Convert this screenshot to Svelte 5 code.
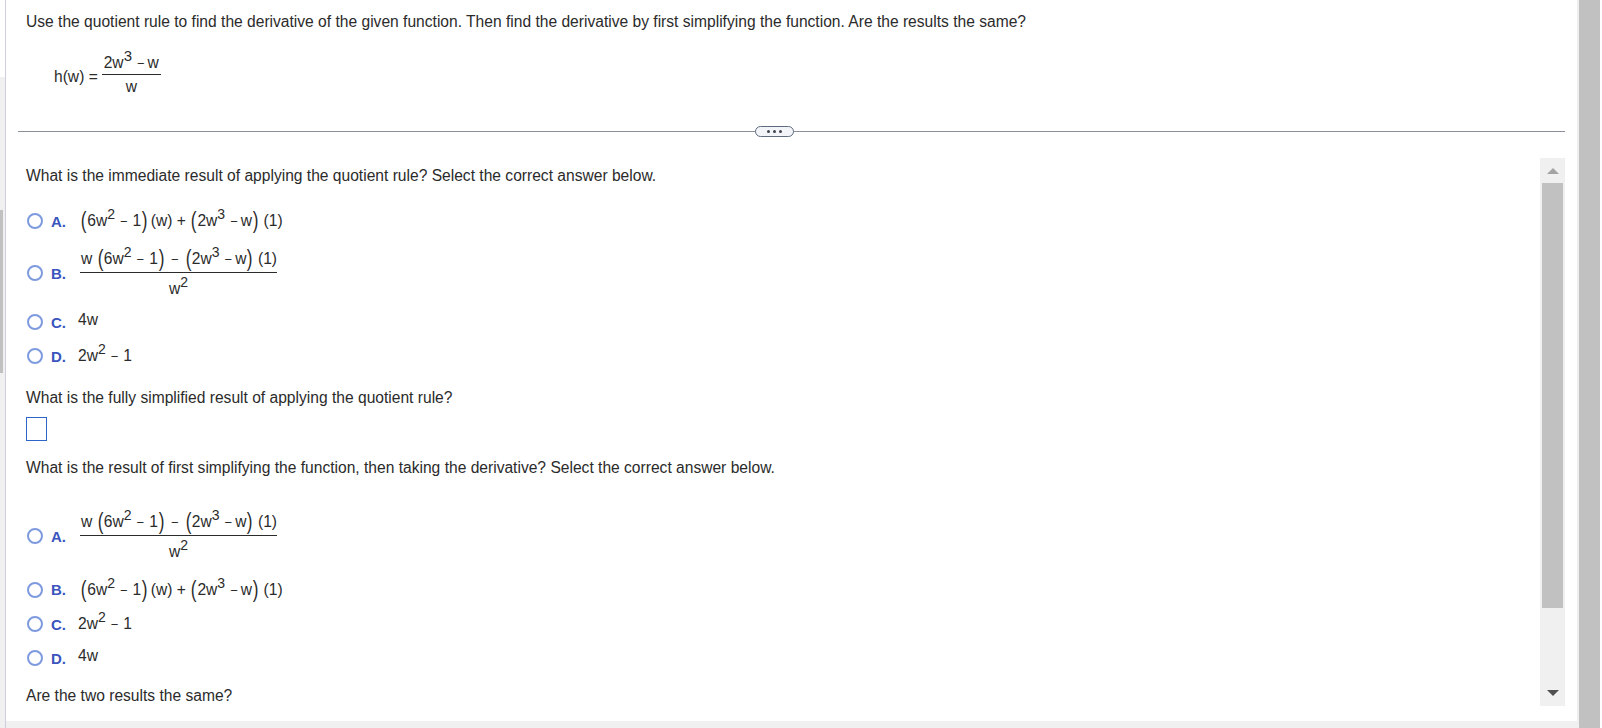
<script lang="ts">
	type Choice = { letter: string; kind: 'product' | 'fraction' | 'four' | 'two' };

	const firstChoices: Choice[] = [
		{ letter: 'A.', kind: 'product' },
		{ letter: 'B.', kind: 'fraction' },
		{ letter: 'C.', kind: 'four' },
		{ letter: 'D.', kind: 'two' }
	];
	const secondChoices: Choice[] = [
		{ letter: 'A.', kind: 'fraction' },
		{ letter: 'B.', kind: 'product' },
		{ letter: 'C.', kind: 'two' },
		{ letter: 'D.', kind: 'four' }
	];
</script>

{#snippet group(inner)}<span class="paren">(</span>{@render inner()}<span class="paren">)</span>{/snippet}

{#snippet six()}6w<sup>2</sup><span class="minus">−</span>1{/snippet}
{#snippet twoCube()}2w<sup>3</sup><span class="minus tight">−</span>w{/snippet}

{#snippet expression(kind)}
	{#if kind === 'product'}
		<span class="math">{@render group(six)}<span class="times">{' (w) + '}</span>{@render group(twoCube)} (1)</span>
	{:else if kind === 'fraction'}
		<span class="frac wide">
			<span class="num">w {@render group(six)}<span class="minus between">−</span>{@render group(twoCube)} (1)</span>
			<span class="den">w<sup>2</sup></span>
		</span>
	{:else if kind === 'four'}
		<span class="math plain raised">4w</span>
	{:else}
		<span class="math plain">2w<sup>2</sup><span class="minus">−</span>1</span>
	{/if}
{/snippet}

{#snippet choices(list, cls)}
	<ul class="choices {cls}">
		{#each list as choice}
			<li class="choice" class:tall={choice.kind === 'fraction'}>
				<span class="radio"></span>
				<span class="letter">{choice.letter}</span>
				{@render expression(choice.kind)}
			</li>
		{/each}
	</ul>
{/snippet}

<div class="page">
	<div class="left-rail">
		<div class="rail-top"></div>
		<div class="rail-thumb"></div>
	</div>
	<div class="sheet">
		<main class="content">
			<header class="stem">
				<p class="title">Use the quotient rule to find the derivative of the given function. Then find the derivative by first simplifying the function. Are the results the same?</p>
				<div class="given">
					<span class="given-name">h(w) =</span>
					<span class="frac given-frac">
						<span class="num">2w<sup class="big-sup">3</sup><span class="minus tight">−</span>w</span>
						<span class="den">w</span>
					</span>
				</div>
			</header>

			<div class="divider">
				<span class="more"><i></i><i></i><i></i></span>
			</div>

			<div class="scroll-area">
				<section class="questions">
					<p class="q q-first">What is the immediate result of applying the quotient rule? Select the correct answer below.</p>
					{@render choices(firstChoices, 'set-one')}
					<p class="q q-simplified">What is the fully simplified result of applying the quotient rule?</p>
					<div class="answer-box"></div>
					<p class="q q-derivative">What is the result of first simplifying the function, then taking the derivative? Select the correct answer below.</p>
					{@render choices(secondChoices, 'set-two')}
					<p class="q q-same">Are the two results the same?</p>
				</section>
				<div class="inner-scroll">
					<div class="arrow-btn"><span class="arrow up"></span></div>
					<div class="inner-thumb"></div>
					<div class="arrow-btn low"><span class="arrow down"></span></div>
				</div>
			</div>
		</main>
		<div class="sheet-foot"></div>
	</div>
	<div class="outer-scroll"><div class="outer-thumb"></div></div>
</div>

<style>
	:global(body) {
		margin: 0;
		background: #fff;
		overflow: hidden;
	}

	.page {
		display: flex;
		height: 728px;
		font-family: 'Liberation Sans', Arial, sans-serif;
		font-size: 15.6px;
		color: #2b2b2b;
	}

	.left-rail {
		width: 5px;
		flex-shrink: 0;
		display: flex;
		flex-direction: column;
		background: #f0f0f0;
	}

	.rail-top {
		height: 77px;
		background: #fff;
	}

	.rail-thumb {
		width: 3px;
		height: 163px;
		margin-top: 133px;
		background: #c1c1c1;
	}

	.sheet {
		flex: 1;
		min-width: 0;
		display: flex;
		flex-direction: column;
		border-left: 1px solid #ccd0de;
	}

	.content {
		flex: 1;
		min-height: 0;
		display: flex;
		flex-direction: column;
	}

	.sheet-foot {
		height: 7px;
		background: #f0f0f0;
	}

	.stem {
		height: 125px;
		padding: 13px 0 0 20px;
		box-sizing: border-box;
	}

	.title,
	.q {
		margin: 0;
		line-height: 18px;
	}

	.given {
		display: flex;
		align-items: center;
		margin: 22px 0 0 28px;
		gap: 4px;
	}

	.given-name {
		padding-top: 1px;
	}

	.frac {
		display: inline-flex;
		flex-direction: column;
		align-items: center;
	}

	.given-frac {
		width: 59px;
	}

	.given-frac .num {
		border-bottom: 1px solid #2b2b2b;
		width: 100%;
		text-align: center;
		line-height: 20px;
		white-space: nowrap;
	}

	.given-frac .den {
		line-height: 24px;
	}

	sup {
		font-size: 14px;
		line-height: 0;
		vertical-align: 7px;
	}

	.big-sup {
		font-size: 15px;
	}

	.minus {
		margin: 0 5px;
		font-size: 13px;
	}

	.minus.tight {
		margin: 0 3px 0 5px;
	}

	.minus.between {
		margin: 0 6px;
	}

	.divider {
		position: relative;
		height: 13px;
		margin-right: 12px;
		flex-shrink: 0;
	}

	.divider::before {
		content: '';
		position: absolute;
		left: 12px;
		right: 0;
		top: 6px;
		height: 1px;
		background: #8b8f9c;
	}

	.more {
		position: absolute;
		left: 749px;
		top: 1px;
		width: 39px;
		height: 11px;
		box-sizing: border-box;
		border: 1px solid #5f6c80;
		border-radius: 6px;
		background: #f2f4f8;
		display: flex;
		align-items: center;
		justify-content: center;
		gap: 3px;
	}

	.more i {
		width: 3px;
		height: 3px;
		border-radius: 50%;
		background: #3f4550;
	}

	.scroll-area {
		flex: 1;
		min-height: 0;
		display: flex;
		padding-right: 12px;
	}

	.questions {
		flex: 1;
		min-width: 0;
		padding-left: 20px;
	}

	.q-first {
		margin-top: 29px;
	}

	.q-simplified {
		margin-top: 16px;
	}

	.q-derivative {
		margin-top: 18px;
	}

	.q-same {
		margin-top: 12px;
	}

	.choices {
		list-style: none;
		margin: 0;
		padding: 0;
	}

	.set-one {
		margin-top: 19px;
	}

	.set-two {
		margin-top: 26px;
	}

	.choice {
		display: flex;
		align-items: center;
		height: 34px;
		padding-left: 1px;
		white-space: nowrap;
	}

	.choice.tall {
		height: 66px;
		margin: 2px 0 -1px;
	}

	.set-two .choice.tall {
		margin-bottom: 3px;
	}

	.set-two .choice:nth-child(2) {
		height: 35px;
	}

	.radio {
		width: 16px;
		height: 16px;
		box-sizing: border-box;
		border: 2px solid #7e9ade;
		border-radius: 50%;
		flex-shrink: 0;
	}

	.letter {
		width: 29px;
		margin-left: 8px;
		flex-shrink: 0;
		color: #3a55bd;
		font-weight: 700;
		font-size: 15px;
	}

	.math {
		white-space: pre;
	}

	.plain {
		margin-left: -2px;
	}

	.raised {
		margin-top: -4px;
	}

	.times {
		margin-left: -2px;
		white-space: pre;
	}

	.paren {
		display: inline-block;
		font-size: 15.6px;
		line-height: 1;
		margin: 0 1px;
		transform: translateY(-1px) scale(1.1, 1.5);
	}

	.wide {
		width: 197px;
	}

	.wide .num {
		width: 100%;
		height: 31px;
		line-height: 33px;
		box-sizing: border-box;
		padding-left: 1px;
		border-bottom: 1px solid #2b2b2b;
		white-space: pre;
		display: block;
	}

	.wide .den {
		line-height: 31px;
		height: 32px;
	}

	.answer-box {
		width: 21px;
		height: 24px;
		margin: 10px 0 0 0;
		box-sizing: border-box;
		border: 1px solid #2b66c8;
	}

	.inner-scroll {
		width: 25px;
		flex-shrink: 0;
		height: 548px;
		margin-top: 20px;
		background: #f0f0f0;
		display: flex;
		flex-direction: column;
		align-items: center;
	}

	.arrow-btn {
		height: 25px;
		width: 100%;
		display: flex;
		align-items: center;
		justify-content: center;
	}

	.arrow-btn.low {
		margin-top: auto;
		height: 26px;
	}

	.arrow {
		width: 0;
		height: 0;
		border-left: 6px solid transparent;
		border-right: 6px solid transparent;
	}

	.arrow.up {
		border-bottom: 6px solid #a3a3a3;
	}

	.arrow.down {
		border-top: 6px solid #505050;
	}

	.inner-thumb {
		width: 21px;
		height: 425px;
		background: #c1c1c1;
	}

	.outer-scroll {
		width: 25px;
		flex-shrink: 0;
		background: #f0f0f0;
		padding-left: 2px;
		border-right: 2px solid #fff;
		box-sizing: border-box;
	}

	.outer-thumb {
		height: 100%;
		background: #c1c1c1;
	}
</style>
